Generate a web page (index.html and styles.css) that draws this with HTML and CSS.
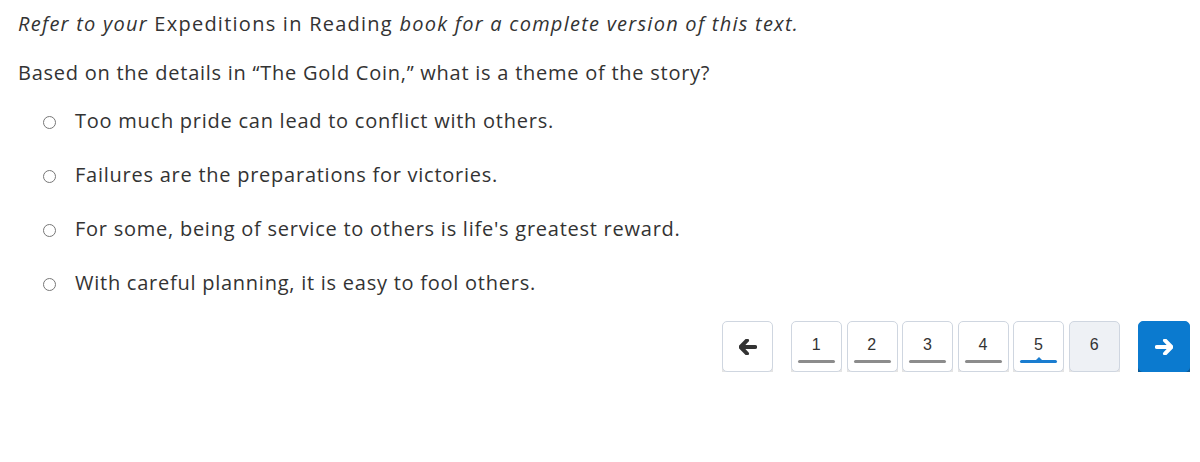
FILE: index.html
```html
<!DOCTYPE html>
<html lang="en">
<head>
<meta charset="utf-8">
<title>Question</title>
<link rel="stylesheet" href="styles.css">
</head>
<body>
<main class="page">
  <p class="note"><em>Refer to your</em> Expeditions in Reading <em>book for a complete version of this text.</em></p>
  <p class="prompt">Based on the details in “The Gold Coin,” what is a theme of the story?</p>
  <ul class="choices">
    <li class="choice"><span class="radio"></span><span class="label">Too much pride can lead to conflict with others.</span></li>
    <li class="choice"><span class="radio"></span><span class="label">Failures are the preparations for victories.</span></li>
    <li class="choice"><span class="radio"></span><span class="label">For some, being of service to others is life's greatest reward.</span></li>
    <li class="choice"><span class="radio"></span><span class="label">With careful planning, it is easy to fool others.</span></li>
  </ul>
  <nav class="pager">
    <button class="btn arrow prev" aria-label="Previous">
      <svg width="18" height="16" viewBox="0 0 18 16"><path d="M8 1.4 L1.6 8 L8 14.6 M2 8 H16.2" fill="none" stroke="#333" stroke-width="4" stroke-linecap="round" stroke-linejoin="round"/></svg>
    </button>
    <div class="pages">
      <button class="btn page">1<span class="bar"></span></button>
      <button class="btn page">2<span class="bar"></span></button>
      <button class="btn page">3<span class="bar"></span></button>
      <button class="btn page">4<span class="bar"></span></button>
      <button class="btn page active">5<span class="bar"></span></button>
      <button class="btn page current">6</button>
    </div>
    <button class="btn arrow next" aria-label="Next">
      <svg width="18" height="16" viewBox="0 0 18 16"><path d="M10 1.4 L16.4 8 L10 14.6 M16 8 H1.8" fill="none" stroke="#fff" stroke-width="4" stroke-linecap="round" stroke-linejoin="round"/></svg>
    </button>
  </nav>
</main>
</body>
</html>
```
FILE: styles.css
```css
html, body {
  margin: 0;
  padding: 0;
  background: #fff;
}
.page {
  padding: 12px 10px 0 18px;
  font-family: "Open Sans", "Liberation Sans", sans-serif;
  font-size: 20px;
  color: #333;
  letter-spacing: 0.75px;
}
.note, .prompt {
  margin: 0;
  line-height: 24px;
}
.note {
  letter-spacing: 1.25px;
}
.prompt {
  margin-top: 25px;
}
.choices {
  list-style: none;
  margin: 24px 0 0 0;
  padding: 0;
  display: flex;
  flex-direction: column;
  gap: 30px;
}
.choice {
  display: flex;
  align-items: center;
  line-height: 24px;
  padding-left: 25px;
}
.radio {
  width: 11px;
  height: 11px;
  border: 1px solid #777;
  border-radius: 50%;
  margin-right: 19px;
  flex: none;
  position: relative;
  top: 1px;
}
.pager {
  display: flex;
  justify-content: flex-end;
  align-items: flex-start;
  margin-top: 26px;
  gap: 18px;
}
.pages {
  display: flex;
  gap: 4.6px;
}
.btn {
  box-sizing: border-box;
  width: 51px;
  height: 51px;
  border: 1px solid #cfd6e0;
  border-radius: 5px;
  background: #fff;
  box-shadow: 0 5px 0 #e4e4e4;
  display: flex;
  align-items: center;
  justify-content: center;
  font-family: "Liberation Sans", Arial, sans-serif;
  font-size: 16px;
  color: #333;
  padding: 0 0 4px 0;
  position: relative;
  margin: 0;
}
.page .bar {
  position: absolute;
  left: 6px;
  right: 6px;
  bottom: 8px;
  height: 3px;
  border-radius: 2px;
  background: #8c8c8c;
}
.page.active .bar {
  background: #1a7dd0;
}
.page.active .bar::after {
  content: "";
  position: absolute;
  left: 50%;
  top: -3px;
  margin-left: -3px;
  border-left: 3px solid transparent;
  border-right: 3px solid transparent;
  border-bottom: 3px solid #1a7dd0;
}
.page.current {
  background: #eef1f5;
}
.arrow {
  padding: 0;
}
.next {
  width: 52px;
  background: #0b7acf;
  border-color: #0b7acf;
  box-shadow: 0 5px 0 #0b5a97;
}
.prev {
  width: 51px;
}
```
